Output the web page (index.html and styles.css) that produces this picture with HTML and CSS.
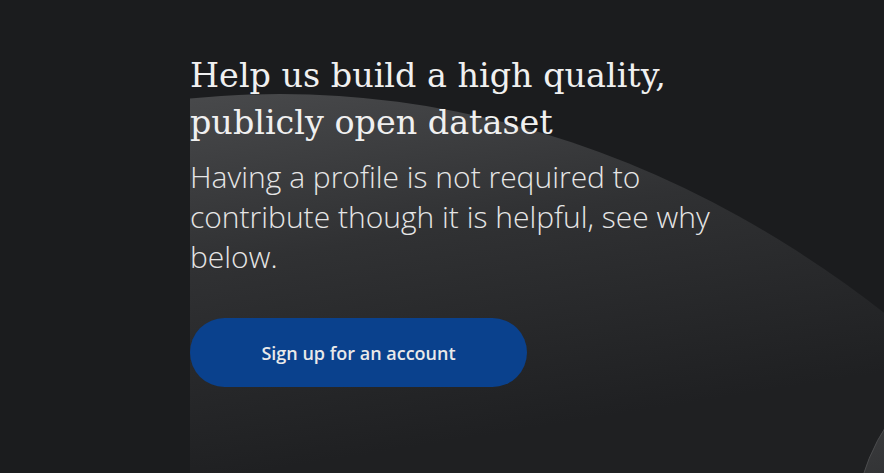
FILE: index.html
```html
<!DOCTYPE html>
<html lang="en">
<head>
<meta charset="utf-8">
<title>Help us build a dataset</title>
<link rel="stylesheet" href="styles.css">
</head>
<body>
<section class="hero">
  <div class="column">
    <svg class="backdrop" width="694" height="473" viewBox="0 0 694 473" aria-hidden="true">
      <defs>
        <linearGradient id="blob" x1="0" y1="95" x2="60" y2="473" gradientUnits="userSpaceOnUse">
          <stop offset="0" stop-color="#48494b"/>
          <stop offset="0.45" stop-color="#303133"/>
          <stop offset="1" stop-color="#1f2022"/>
        </linearGradient>
        <linearGradient id="blob2" x1="680" y1="420" x2="694" y2="473" gradientUnits="userSpaceOnUse">
          <stop offset="0" stop-color="#3a3b3d"/>
          <stop offset="1" stop-color="#333436"/>
        </linearGradient>
      </defs>
      <ellipse cx="90" cy="1704" rx="1200" ry="1610" fill="url(#blob)"/>
      <circle cx="865" cy="535" r="201" fill="url(#blob2)" stroke="#4a4b4d" stroke-width="1"/>
    </svg>
    <div class="content">
      <h1 class="title">Help us build a high quality, publicly open dataset</h1>
      <p class="lead">Having a profile is not required to contribute though it is helpful, see why below.</p>
      <a class="cta" href="#">Sign up for an account</a>
    </div>
  </div>
</section>
</body>
</html>
```

FILE: styles.css
```css
html, body {
  margin: 0;
  padding: 0;
  background: #1b1c1e;
}

.hero {
  height: 473px;
  overflow: hidden;
  padding-left: 190px;
  box-sizing: border-box;
}

.column {
  position: relative;
  height: 100%;
}

.backdrop {
  position: absolute;
  left: 0;
  top: 0;
  display: block;
}

.content {
  position: relative;
  width: 540px;
  padding-top: 52px;
}

.title {
  margin: 0;
  font-family: "DejaVu Serif", serif;
  font-weight: normal;
  font-size: 33.4px;
  line-height: 47px;
  color: #f0f0f0;
}

.lead {
  margin: 11px 0 0;
  font-family: "Open Sans", sans-serif;
  font-weight: 300;
  font-size: 30px;
  line-height: 40px;
  color: #e6e6e6;
}

.cta {
  display: flex;
  align-items: center;
  justify-content: center;
  width: 337px;
  height: 69px;
  margin-top: 41px;
  border-radius: 35px;
  background: #0a418d;
  color: #e9e9e9;
  font-family: "Open Sans", sans-serif;
  font-weight: 600;
  font-size: 18px;
  text-decoration: none;
}
```
